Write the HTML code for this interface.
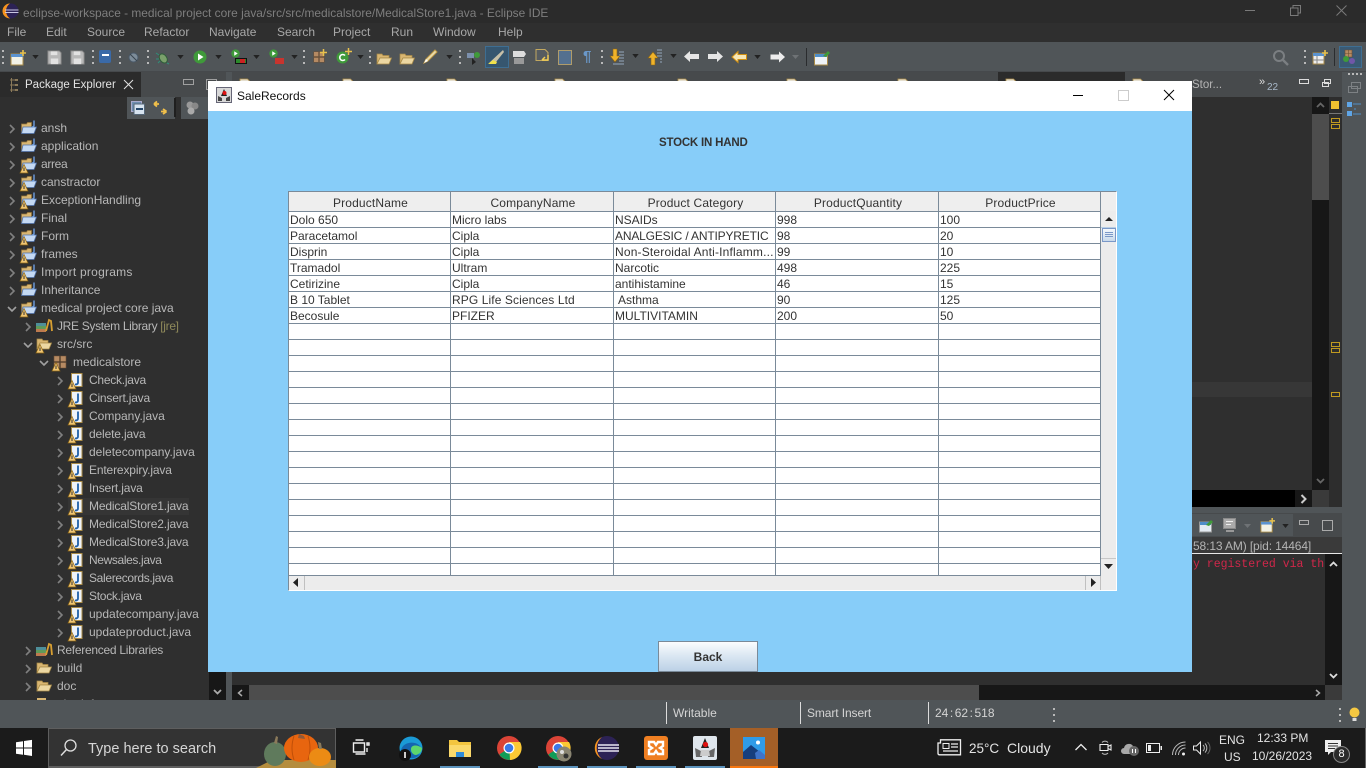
<!DOCTYPE html>
<html><head><meta charset="utf-8"><title>Eclipse</title>
<style>
html,body{margin:0;padding:0;width:1366px;height:768px;overflow:hidden;background:#505558}
body{position:relative;font-family:"Liberation Sans",sans-serif}
.b{position:absolute}
.t{position:absolute;white-space:nowrap;line-height:16px}
.m{color:#a8a8a8;font-size:12px;top:24px}
.tr{color:#b8b8b8;font-size:12px}
svg{position:absolute;overflow:visible}
symbol{overflow:visible}
.h{position:absolute;top:192px;height:19px;background:#eeeeee;text-align:center;font-size:12px;line-height:22px;color:#333;box-sizing:border-box;letter-spacing:.15px;padding-left:2px}
.c{position:absolute;font-size:12px;color:#333;line-height:16px;white-space:nowrap;overflow:hidden}
.hl{position:absolute;left:289px;width:812px;height:1px;background:#7a8a99}
.vl{position:absolute;top:192px;width:1px;height:383px;background:#7a8a99}
.dot{position:absolute;width:2px;height:2px;background:#b9b9b9}
.tb{position:absolute;left:0;bottom:0;height:2px;width:40px;background:#5c93bd}
</style></head><body>
<svg width="0" height="0" style="position:absolute">
<defs>
<symbol id="chev" viewBox="0 0 10 10"><path d="M3 1l4 4-4 4" fill="none" stroke="#808080" stroke-width="1.6"/></symbol>
<symbol id="chevd" viewBox="0 0 10 10"><path d="M1 3l4 4 4-4" fill="none" stroke="#a0a0a0" stroke-width="1.6"/></symbol>
<symbol id="warn" viewBox="0 0 8 8"><path d="M4-1.500L8 7H0z" fill="#f0c674" stroke="#8a6414" stroke-width=".7"/><path d="M4 1.500v3.500" stroke="#333" stroke-width="1"/></symbol>
<symbol id="proj" viewBox="0 0 16 16"><path d="M1 4h5l1-1.500h4V13H1z" fill="#d9b672" stroke="#96753a" stroke-width=".7"/><path d="M2.500 7H16l-2.500 6.500H1z" fill="#c4d9f3" stroke="#4d6fa8" stroke-width=".8"/><path d="M13.500 .5v5q0 1.500-2 1.500" fill="none" stroke="#6f9fe0" stroke-width="1.400"/></symbol>
<symbol id="jf" viewBox="0 0 16 16"><path d="M3.500 1.500h10.500v13H3.500z" fill="#eef3fa" stroke="#a98b47" stroke-width="1"/><path d="M10 3.500v7q0 2-3 2" fill="none" stroke="#1f5fa8" stroke-width="1.800"/></symbol>
<symbol id="lib" viewBox="0 0 16 16"><path d="M0 5h10v3H0z" fill="#4e8f9a"/><path d="M0 8h10v3H0z" fill="#5f9b5a"/><path d="M0 11h10v3H0z" fill="#bd7a4e"/><path d="M10 13l3-11 2 1 1 10" fill="none" stroke="#d9a032" stroke-width="1.800"/></symbol>
<symbol id="folder" viewBox="0 0 16 16"><path d="M1 3h5l1 1.500h5V7H4L1 13z" fill="#d9b672" stroke="#a98b47" stroke-width=".7"/><path d="M4 7h11.500L13 13H1z" fill="#ecd7a2" stroke="#a98b47" stroke-width=".8"/></symbol>
<symbol id="pkg" viewBox="0 0 16 16"><path d="M2 2h5.500v5.500H2zM8.500 2H14v5.500H8.500zM2 8.500h5.500V14H2zM8.500 8.500H14V14H8.500z" fill="#b58a63" stroke="#6e4f33" stroke-width=".6"/></symbol>
<symbol id="dd" viewBox="0 0 8 5"><path d="M0 0h8L4 5z" fill="#222"/></symbol>
<symbol id="newf" viewBox="0 0 16 16"><path d="M1 4h12v11H1z" fill="#f2f2e6" stroke="#a98b47"/><path d="M1 4h12v3H1z" fill="#5c93cf"/><path d="M13 0v6M10 3h6" stroke="#e8c14d" stroke-width="1.600"/></symbol>
<symbol id="run" viewBox="0 0 14 14"><circle cx="7" cy="7" r="6.500" fill="#3f9a3a"/><path d="M5 3.500L10.500 7 5 10.500z" fill="#fff"/></symbol>
<symbol id="save" viewBox="0 0 16 16"><path d="M1 1h12l2 2v12H1z" fill="#b8b8b8" stroke="#8a8a8a"/><path d="M4 1.500h7v4H4zM4 9h8v6H4z" fill="#e2e2e2"/></symbol>
<symbol id="fo" viewBox="0 0 16 16"><path d="M1 4h5l1 1.500h6V8H4l-3 6z" fill="#d9b672" stroke="#a98b47" stroke-width=".7"/><path d="M4 8h11.500L13 14H1z" fill="#ecd7a2" stroke="#a98b47" stroke-width=".8"/></symbol>
<symbol id="ffile" viewBox="0 0 12 14"><path d="M0 14V1h9l3 3v10" fill="#e5dfcf" stroke="#b08f48"/></symbol>
</defs></svg>

<!-- title -->
<div class="b" style="left:0;top:0;width:1366px;height:23px;background:#2b2b2b"></div>
<svg style="left:3px;top:3px" width="16" height="16" viewBox="0 0 16 16"><circle cx="8" cy="8" r="7.500" fill="#2c2255"/><path d="M7 .5A7.500 7.500 0 0 0 7 15.500 9 9 0 0 1 7 .5z" fill="#f7941e"/><path d="M2 7h13.500M2 9.500h13.500" stroke="#c8c6e2" stroke-width="1"/></svg>
<div class="t" style="left:23px;top:5px;font-size:11.900px;color:#7e7e7e">eclipse-workspace - medical project core java/src/src/medicalstore/MedicalStore1.java - Eclipse IDE</div>
<div class="b" style="left:1245px;top:10px;width:10px;height:1px;background:#7a7a7a"></div>
<svg style="left:1290px;top:5px" width="11" height="11"><path d="M.5 3h7.500v7.500H.5zM3 3V.5h7.500V8H8" fill="none" stroke="#7a7a7a"/></svg>
<svg style="left:1336px;top:5px" width="11" height="11"><path d="M.5.500l10 10M10.500.500l-10 10" stroke="#7a7a7a"/></svg>

<!-- menu -->
<div class="b" style="left:0;top:23px;width:1366px;height:19px;background:#2f2f2f"></div>
<span class="t m" style="left:7px">File</span><span class="t m" style="left:46px">Edit</span><span class="t m" style="left:87px">Source</span><span class="t m" style="left:144px">Refactor</span><span class="t m" style="left:209px">Navigate</span><span class="t m" style="left:277px">Search</span><span class="t m" style="left:333px">Project</span><span class="t m" style="left:391px">Run</span><span class="t m" style="left:433px">Window</span><span class="t m" style="left:498px">Help</span>

<!-- toolbar -->
<div class="b" style="left:0;top:42px;width:1366px;height:29px;background:#505558"></div>
<div class="b" style="left:0;top:71px;width:1366px;height:1px;background:#46494c"></div>
<div class="dot" style="left:2px;top:50px"></div><div class="dot" style="left:2px;top:56px"></div><div class="dot" style="left:2px;top:62px"></div>
<svg style="left:10px;top:50px" width="16" height="16"><use href="#newf"/></svg>
<svg style="left:32px;top:55px" width="7" height="4"><use href="#dd"/></svg>
<svg style="left:47px;top:50px" width="15" height="15"><use href="#save"/></svg>
<svg style="left:70px;top:50px" width="15" height="15"><use href="#save"/></svg>
<div class="dot" style="left:92px;top:50px"></div><div class="dot" style="left:92px;top:56px"></div><div class="dot" style="left:92px;top:62px"></div>
<div class="b" style="left:99px;top:50px;width:12px;height:13px;background:#3a6aa8;border-radius:2px"></div><div class="b" style="left:102px;top:54px;width:7px;height:2px;background:#fff"></div>
<div class="dot" style="left:119px;top:50px"></div><div class="dot" style="left:119px;top:56px"></div><div class="dot" style="left:119px;top:62px"></div>
<svg style="left:128px;top:52px" width="11" height="11"><circle cx="5.500" cy="5.500" r="4.500" fill="#7d8c99" stroke="#4a5a6a"/><path d="M2 2l7 7" stroke="#39454f"/></svg>
<div class="dot" style="left:147px;top:50px"></div><div class="dot" style="left:147px;top:56px"></div><div class="dot" style="left:147px;top:62px"></div>
<svg style="left:155px;top:50px" width="16" height="15"><ellipse cx="8" cy="8.500" rx="3.500" ry="5" fill="#7aa06b" stroke="#2f5d3a" transform="rotate(-35 8 8)"/><path d="M1 3l3 2M1 9h3M12 13l2 1M3 13l2-2" stroke="#2f8f7a"/></svg>
<svg style="left:177px;top:55px" width="7" height="4"><use href="#dd"/></svg>
<svg style="left:193px;top:50px" width="14" height="14"><use href="#run"/></svg>
<svg style="left:215px;top:55px" width="7" height="4"><use href="#dd"/></svg>
<svg style="left:231px;top:49px" width="9" height="9"><use href="#run"/></svg>
<div class="b" style="left:235px;top:58px;width:10px;height:4px;background:#2b8a2b;border:1px solid #111"></div><div class="b" style="left:240px;top:59px;width:5px;height:4px;background:#c22"></div>
<svg style="left:253px;top:55px" width="7" height="4"><use href="#dd"/></svg>
<svg style="left:269px;top:49px" width="9" height="9"><use href="#run"/></svg>
<div class="b" style="left:275px;top:58px;width:9px;height:6px;background:#c8342e"></div>
<svg style="left:291px;top:55px" width="7" height="4"><use href="#dd"/></svg>
<div class="dot" style="left:303px;top:50px"></div><div class="dot" style="left:303px;top:56px"></div><div class="dot" style="left:303px;top:62px"></div>
<svg style="left:312px;top:50px" width="14" height="14"><use href="#pkg"/></svg><svg style="left:320px;top:49px" width="7" height="7"><path d="M3.500 0v7M0 3.500h7" stroke="#e8c14d" stroke-width="1.500"/></svg>
<svg style="left:336px;top:51px" width="13" height="13"><circle cx="6.500" cy="6.500" r="6" fill="#3f9a3a"/><path d="M9 4.500a3 3 0 1 0 0 4" fill="none" stroke="#fff" stroke-width="1.600"/></svg><svg style="left:345px;top:48px" width="7" height="7"><path d="M3.500 0v7M0 3.500h7" stroke="#e8c14d" stroke-width="1.500"/></svg>
<svg style="left:357px;top:55px" width="7" height="4"><use href="#dd"/></svg>
<div class="dot" style="left:369px;top:50px"></div><div class="dot" style="left:369px;top:56px"></div><div class="dot" style="left:369px;top:62px"></div>
<svg style="left:376px;top:50px" width="16" height="16"><use href="#fo"/></svg>
<svg style="left:399px;top:50px" width="16" height="16"><use href="#fo"/></svg>
<svg style="left:423px;top:49px" width="16" height="16"><path d="M1 14l4-2 9-9-2-2-9 9z" fill="#eadcae" stroke="#bf9a45"/><path d="M1 14l2-4 2 2z" fill="#fff"/></svg>
<svg style="left:446px;top:55px" width="7" height="4"><use href="#dd"/></svg>
<div class="dot" style="left:459px;top:50px"></div><div class="dot" style="left:459px;top:56px"></div><div class="dot" style="left:459px;top:62px"></div>
<svg style="left:466px;top:50px" width="15" height="15"><path d="M1 3h7v5H1z" fill="#7c90ad"/><circle cx="11" cy="5" r="3" fill="#3f9a3a"/><path d="M6 8v7l4-3z" fill="#222"/></svg>
<div class="b" style="left:485px;top:46px;width:22px;height:20px;background:#36566f;border:1px solid #3e6e92"></div>
<svg style="left:488px;top:49px" width="17" height="16"><path d="M1 14L15 1l1 2-8 10z" fill="#c7c0a8"/><path d="M0 15l5-4 4 2-1 2z" fill="#efe14b"/></svg>
<svg style="left:512px;top:50px" width="15" height="15"><path d="M1 1h11l2 3-2 3H1z" fill="#ddd"/><path d="M2 8h10v6H2z" fill="#999"/></svg>
<svg style="left:535px;top:49px" width="15" height="15"><path d="M1 .5h9l3 3v8H1z" fill="#555b60" stroke="#c2a860"/><path d="M7 11h6V6M7 11l3-3" fill="none" stroke="#f0cc55" stroke-width="1.500"/></svg>
<div class="b" style="left:558px;top:50px;width:12px;height:13px;background:#54708f;border:1px solid #b09c6a"></div>
<span class="t" style="left:583px;top:49px;font-size:15px;font-weight:bold;color:#6a98c9">¶</span>
<div class="dot" style="left:601px;top:50px"></div><div class="dot" style="left:601px;top:56px"></div><div class="dot" style="left:601px;top:62px"></div>
<svg style="left:610px;top:48px" width="15" height="18"><path d="M3 1h4v7h3l-5 6-5-6h3z" fill="#f0b32a" stroke="#8a6414" stroke-width=".6"/><path d="M9 4h5M9 7h5M9 10h5M9 13h5M3 16h11" stroke="#94a7bd"/></svg>
<svg style="left:632px;top:54px" width="7" height="4"><use href="#dd"/></svg>
<svg style="left:648px;top:48px" width="15" height="18"><path d="M5 4l5 6H7v7H3v-7H0z" fill="#f0b32a" stroke="#8a6414" stroke-width=".6"/><path d="M9 2h5M9 5h5M9 8h5M12 11h2M12 14h2" stroke="#94a7bd"/></svg>
<svg style="left:670px;top:54px" width="7" height="4"><use href="#dd"/></svg>
<svg style="left:684px;top:50px" width="16" height="13"><path d="M0 6.500L6 1v3h9v5H6v3z" fill="#e6e6e6"/></svg>
<svg style="left:707px;top:50px" width="16" height="13"><path d="M16 6.500L10 1v3H1v5h9v3z" fill="#e6e6e6"/></svg>
<svg style="left:732px;top:51px" width="15" height="12"><path d="M0 6L6 .5v3h8.500v5H6v3z" fill="#f7e7b6" stroke="#d18f10"/></svg>
<svg style="left:754px;top:55px" width="7" height="4"><use href="#dd"/></svg>
<svg style="left:770px;top:51px" width="15" height="12"><path d="M15 6L9 .5v3H.5v5H9v3z" fill="#ededed"/></svg>
<svg style="left:792px;top:55px" width="7" height="4"><path d="M0 0h7L3.500 4z" fill="#6e7275"/></svg>
<div class="b" style="left:806px;top:48px;width:1px;height:18px;background:#2a2c2e"></div>
<svg style="left:814px;top:50px" width="16" height="16"><path d="M.5 4h13v11H.5z" fill="#eef3f8" stroke="#a98b47"/><path d="M1 4h12v3H1z" fill="#4f8ec9"/><path d="M9 6l5-5 2 2-4 4z" fill="#3f9a3a"/></svg>
<svg style="left:1273px;top:50px" width="16" height="16"><circle cx="6" cy="6" r="5" fill="none" stroke="#7b7f82" stroke-width="2"/><path d="M10 10l5 5" stroke="#7b7f82" stroke-width="2.400"/></svg>
<div class="dot" style="left:1304px;top:50px"></div><div class="dot" style="left:1304px;top:56px"></div><div class="dot" style="left:1304px;top:62px"></div>
<svg style="left:1312px;top:50px" width="16" height="15"><path d="M1 3h11v11H1z" fill="#eee" stroke="#a98b47"/><path d="M1 3h11v3H1z" fill="#5c93cf"/><path d="M5 6v8M1 10h11" stroke="#888"/><path d="M13 0v6M10 3h6" stroke="#e8c14d" stroke-width="1.600"/></svg>
<div class="b" style="left:1334px;top:48px;width:1px;height:18px;background:#2a2c2e"></div>
<div class="b" style="left:1339px;top:46px;width:21px;height:20px;background:#3a5a74;border:1px solid #3e6e92"></div>
<svg style="left:1342px;top:49px" width="16" height="16"><path d="M3 1h7v7H3z" fill="#b58a63" stroke="#6e4f33" stroke-width=".6"/><path d="M3 4.500h7M6.500 1v7" stroke="#6e4f33" stroke-width=".6"/><circle cx="4" cy="10" r="3" fill="#3f9a3a"/><circle cx="10" cy="12" r="3" fill="#7057a8"/></svg>

<!-- tab strip + panels -->
<div class="b" style="left:0;top:72px;width:1342px;height:25px;background:#474a4c"></div>
<div class="b" style="left:226px;top:72px;width:6px;height:628px;background:#505558"></div>
<div class="b" style="left:232px;top:97px;width:1093px;height:588px;background:#2f2f2f"></div>
<div class="b" style="left:0;top:72px;width:141px;height:25px;background:#2b2b2b"></div>
<div class="b" style="left:998px;top:72px;width:127px;height:25px;background:#2b2b2b"></div>
<svg style="left:9px;top:78px" width="10" height="14"><path d="M2.500 0v14M1 2h8M1 7h8M1 12h8" stroke="#8b7a5a"/><path d="M6 1h3v2H6zM6 6h3v2H6zM6 11h3v2H6z" fill="#8b7a5a"/></svg>
<span class="t" style="left:25px;top:77px;font-size:11.500px;color:#e3e3e3">Package Explorer</span>
<svg style="left:124px;top:80px" width="9" height="9"><path d="M0 0l9 9M9 0L0 9" stroke="#e0e0e0"/></svg>
<div class="b" style="left:183px;top:79px;width:9px;height:4px;border:1px solid #a0a0a0"></div>
<div class="b" style="left:206px;top:79px;width:9px;height:9px;border:1px solid #a0a0a0"></div>
<div class="b" style="left:0;top:97px;width:226px;height:603px;background:#2f2f2f"></div>
<div class="b" style="left:127px;top:97px;width:48px;height:22px;background:#505558"></div>
<div class="b" style="left:181px;top:97px;width:27px;height:22px;background:#505558"></div>
<div class="b" style="left:174px;top:98px;width:2px;height:19px;background:#1f1f1f"></div>
<svg style="left:131px;top:101px" width="14" height="14"><path d="M.5.500h10v10H.5z" fill="#6f8fb0" stroke="#aac"/><path d="M3 3h10.500v10.500H3z" fill="#d7e3ef" stroke="#567"/><path d="M5 8h7" stroke="#27486b" stroke-width="2"/></svg>
<svg style="left:153px;top:101px" width="14" height="14"><path d="M6 3H1m0 0l3-2.500M1 3l3 2.500M8 10.500h5.500m0 0L10 8m3.500 2.500L10 13" fill="none" stroke="#f0bf4a" stroke-width="1.800"/></svg>
<svg style="left:185px;top:101px" width="14" height="14"><circle cx="5" cy="4" r="3.500" fill="#999"/><circle cx="10" cy="5" r="3.500" fill="#888"/><circle cx="6" cy="10" r="3.500" fill="#aaa"/></svg>

<!-- editor right -->
<div class="b" style="left:1192px;top:382px;width:120px;height:15px;background:#373737"></div>
<div class="b" style="left:1312px;top:97px;width:17px;height:393px;background:#171717"></div>
<div class="b" style="left:1312px;top:114px;width:17px;height:86px;background:#4d4d4d"></div>
<svg style="left:1316px;top:102px" width="9" height="6"><path d="M1 5l3.500-3.500L8 5" fill="none" stroke="#666" stroke-width="1.800"/></svg>
<svg style="left:1316px;top:478px" width="9" height="6"><path d="M1 1l3.500 3.500L8 1" fill="none" stroke="#666" stroke-width="1.800"/></svg>
<div class="b" style="left:1329px;top:97px;width:13px;height:410px;background:#2d2d2d"></div>
<div class="b" style="left:1331px;top:101px;width:8px;height:8px;background:#f0c030"></div>
<div class="b" style="left:1329px;top:113px;width:13px;height:1px;background:#777"></div>
<div class="b" style="left:1331px;top:118px;width:7px;height:3px;border:1px solid #c09a20"></div>
<div class="b" style="left:1331px;top:124px;width:7px;height:3px;border:1px solid #c09a20"></div>
<div class="b" style="left:1331px;top:342px;width:7px;height:3px;border:1px solid #c09a20"></div>
<div class="b" style="left:1331px;top:348px;width:7px;height:3px;border:1px solid #c09a20"></div>
<div class="b" style="left:1331px;top:392px;width:7px;height:3px;border:1px solid #c09a20"></div>
<div class="b" style="left:1192px;top:490px;width:103px;height:17px;background:#000"></div>
<div class="b" style="left:1295px;top:490px;width:17px;height:17px;background:#171717"></div>
<svg style="left:1300px;top:494px" width="8" height="10"><path d="M1.500 1l4 4-4 4" fill="none" stroke="#ccc" stroke-width="2"/></svg>
<div class="b" style="left:1312px;top:490px;width:17px;height:17px;background:#3a3a3a"></div>
<div class="b" style="left:1192px;top:507px;width:150px;height:6px;background:#505558"></div>

<!-- console -->
<div class="b" style="left:1192px;top:513px;width:150px;height:24px;background:#474a4c"></div>
<div class="b" style="left:1192px;top:514px;width:101px;height:22px;background:#505558"></div>
<svg style="left:1199px;top:519px" width="14" height="14"><path d="M.5 3h12v10H.5z" fill="#e4ebf2" stroke="#999"/><path d="M1 3h11v3H1z" fill="#4f8ec9"/><path d="M7 6l5-5 2 2-4 4z" fill="#3f9a3a"/></svg>
<svg style="left:1223px;top:518px" width="14" height="15"><path d="M.5.500h12v10H.5z" fill="#aaa" stroke="#8a8a8a"/><path d="M3 3.500h7M3 6.500h5" stroke="#eee"/><path d="M3 13h8" stroke="#999" stroke-width="2"/></svg>
<svg style="left:1244px;top:524px" width="7" height="4"><path d="M0 0h7L3.500 4z" fill="#6e7275"/></svg>
<svg style="left:1260px;top:518px" width="15" height="15"><use href="#newf"/></svg>
<svg style="left:1282px;top:524px" width="7" height="4"><use href="#dd"/></svg>
<div class="b" style="left:1299px;top:520px;width:8px;height:3px;border:1px solid #aaa"></div>
<div class="b" style="left:1322px;top:520px;width:9px;height:9px;border:1px solid #aaa"></div>
<div class="b" style="left:1192px;top:537px;width:150px;height:16px;background:#3a3a3a"></div>
<span class="t" style="left:1193px;top:538px;font-size:12px;letter-spacing:-.12px;color:#b4b4b4">58:13 AM) [pid: 14464]</span>
<div class="b" style="left:1192px;top:553px;width:150px;height:1px;background:#e8e8e8"></div>
<div class="b" style="left:1192px;top:554px;width:133px;height:131px;background:#2f2f2f"></div>
<span class="t" style="left:1193px;top:557px;width:132px;overflow:hidden;font-family:'Liberation Mono',monospace;font-size:11.500px;line-height:16px;height:16px;color:#d0274a">y registered via th</span>
<div class="b" style="left:1325px;top:554px;width:17px;height:131px;background:#171717"></div>
<svg style="left:1329px;top:561px" width="9" height="6"><path d="M1 5l3.500-3.500L8 5" fill="none" stroke="#ddd" stroke-width="1.800"/></svg>
<svg style="left:1329px;top:673px" width="9" height="6"><path d="M1 1l3.500 3.500L8 1" fill="none" stroke="#ddd" stroke-width="1.800"/></svg>
<div class="b" style="left:232px;top:685px;width:1110px;height:15px;background:#171717"></div>
<div class="b" style="left:249px;top:685px;width:730px;height:15px;background:#4d4d4d"></div>
<svg style="left:237px;top:689px" width="6" height="8"><path d="M5 1L1.500 4 5 7" fill="none" stroke="#aaa" stroke-width="1.500"/></svg>
<svg style="left:1315px;top:689px" width="6" height="8"><path d="M1 1l3.500 3L1 7" fill="none" stroke="#aaa" stroke-width="1.500"/></svg>
<div class="b" style="left:1325px;top:685px;width:17px;height:15px;background:#3a3a3a"></div>
<div class="b" style="left:209px;top:97px;width:17px;height:603px;background:#171717"></div>
<svg style="left:213px;top:689px" width="9" height="6"><path d="M1 1l3.500 3.500L8 1" fill="none" stroke="#aaa" stroke-width="1.800"/></svg>

<!-- right trim -->
<div class="dot" style="left:1348px;top:73px"></div><div class="dot" style="left:1352px;top:73px"></div><div class="dot" style="left:1356px;top:73px"></div><div class="dot" style="left:1360px;top:73px"></div>
<svg style="left:1348px;top:82px" width="13" height="12"><path d="M3.500.5h9v6h-9zM.5 4.500h9v6h-9z" fill="none" stroke="#7d8184"/></svg>
<svg style="left:1347px;top:102px" width="15" height="16"><path d="M0 0h5v5H0zM0 9h5v5H0z" fill="#5fa5e6"/><path d="M6 2h8M7 7h2M6 12h8" stroke="#4f8ec9"/></svg>
<span class="t" style="left:1192px;top:77px;font-size:11.500px;color:#b4b4b4">Stor...</span>
<span class="t" style="left:1259px;top:74px;font-size:11px;color:#ddd">»</span>
<span class="t" style="left:1267px;top:80px;font-size:10px;color:#a8b8c8">22</span>
<div class="b" style="left:1299px;top:79px;width:8px;height:3px;border:1px solid #ddd"></div>
<svg style="left:1322px;top:79px" width="9" height="8"><path d="M2.500.5h6v4h-6zM.5 3.500h6v4h-6z" fill="none" stroke="#ddd"/></svg>
<svg style="left:240px;top:78px" width="10" height="12"><use href="#ffile"/></svg><svg style="left:343px;top:78px" width="10" height="12"><use href="#ffile"/></svg><svg style="left:447px;top:78px" width="10" height="12"><use href="#ffile"/></svg><svg style="left:555px;top:78px" width="10" height="12"><use href="#ffile"/></svg><svg style="left:678px;top:78px" width="10" height="12"><use href="#ffile"/></svg><svg style="left:787px;top:78px" width="10" height="12"><use href="#ffile"/></svg><svg style="left:898px;top:78px" width="10" height="12"><use href="#ffile"/></svg><svg style="left:1006px;top:78px" width="10" height="12"><use href="#ffile"/></svg><svg style="left:1133px;top:78px" width="10" height="12"><use href="#ffile"/></svg>

<!-- tree -->
<span class="t tr" style="left:41px;top:120px">ansh</span>
<span class="t tr" style="left:41px;top:138px">application</span>
<span class="t tr" style="left:41px;top:156px;letter-spacing:-.35px">arrea</span>
<span class="t tr" style="left:41px;top:174px">canstractor</span>
<span class="t tr" style="left:41px;top:192px">ExceptionHandling</span>
<span class="t tr" style="left:41px;top:210px">Final</span>
<span class="t tr" style="left:41px;top:228px">Form</span>
<span class="t tr" style="left:41px;top:246px">frames</span>
<span class="t tr" style="left:41px;top:264px;letter-spacing:.24px">Import programs</span>
<span class="t tr" style="left:41px;top:282px">Inheritance</span>
<span class="t tr" style="left:41px;top:300px">medical project core java</span>
<span class="t tr" style="left:57px;top:318px;letter-spacing:-.32px">JRE System Library <span style="color:#8f8a5a">[jre]</span></span>
<span class="t tr" style="left:57px;top:336px">src/src</span>
<span class="t tr" style="left:73px;top:354px">medicalstore</span>
<span class="t tr" style="left:89px;top:372px;letter-spacing:-.25px">Check.java</span>
<span class="t tr" style="left:89px;top:390px;letter-spacing:-.2px">Cinsert.java</span>
<span class="t tr" style="left:89px;top:408px">Company.java</span>
<span class="t tr" style="left:89px;top:426px;letter-spacing:-.15px">delete.java</span>
<span class="t tr" style="left:89px;top:444px">deletecompany.java</span>
<span class="t tr" style="left:89px;top:462px;letter-spacing:-.15px">Enterexpiry.java</span>
<span class="t tr" style="left:89px;top:480px;letter-spacing:-.15px">Insert.java</span>
<div class="b" style="left:68px;top:498px;width:121px;height:17px;background:#353535"></div>
<span class="t tr" style="left:89px;top:498px;letter-spacing:-.15px">MedicalStore1.java</span>
<span class="t tr" style="left:89px;top:516px;letter-spacing:-.15px">MedicalStore2.java</span>
<span class="t tr" style="left:89px;top:534px;letter-spacing:-.15px">MedicalStore3.java</span>
<span class="t tr" style="left:89px;top:552px;letter-spacing:-.37px">Newsales.java</span>
<span class="t tr" style="left:89px;top:570px;letter-spacing:-.33px">Salerecords.java</span>
<span class="t tr" style="left:89px;top:588px;letter-spacing:-.27px">Stock.java</span>
<span class="t tr" style="left:89px;top:606px">updatecompany.java</span>
<span class="t tr" style="left:89px;top:624px">updateproduct.java</span>
<span class="t tr" style="left:57px;top:642px;letter-spacing:-.27px">Referenced Libraries</span>
<span class="t tr" style="left:57px;top:660px">build</span>
<span class="t tr" style="left:57px;top:678px">doc</span>

<svg style="left:7px;top:124px" width="10" height="10"><use href="#chev"/></svg><svg style="left:20px;top:120px" width="17" height="16"><use href="#proj"/></svg>
<svg style="left:7px;top:142px" width="10" height="10"><use href="#chev"/></svg><svg style="left:20px;top:138px" width="17" height="16"><use href="#proj"/></svg>
<svg style="left:7px;top:160px" width="10" height="10"><use href="#chev"/></svg><svg style="left:20px;top:156px" width="17" height="16"><use href="#proj"/></svg><svg style="left:20px;top:166px" width="8" height="8"><use href="#warn"/></svg>
<svg style="left:7px;top:178px" width="10" height="10"><use href="#chev"/></svg><svg style="left:20px;top:174px" width="17" height="16"><use href="#proj"/></svg><svg style="left:20px;top:184px" width="8" height="8"><use href="#warn"/></svg>
<svg style="left:7px;top:196px" width="10" height="10"><use href="#chev"/></svg><svg style="left:20px;top:192px" width="17" height="16"><use href="#proj"/></svg><svg style="left:20px;top:202px" width="8" height="8"><use href="#warn"/></svg>
<svg style="left:7px;top:214px" width="10" height="10"><use href="#chev"/></svg><svg style="left:20px;top:210px" width="17" height="16"><use href="#proj"/></svg>
<svg style="left:7px;top:232px" width="10" height="10"><use href="#chev"/></svg><svg style="left:20px;top:228px" width="17" height="16"><use href="#proj"/></svg><svg style="left:20px;top:238px" width="8" height="8"><use href="#warn"/></svg>
<svg style="left:7px;top:250px" width="10" height="10"><use href="#chev"/></svg><svg style="left:20px;top:246px" width="17" height="16"><use href="#proj"/></svg><svg style="left:20px;top:256px" width="8" height="8"><use href="#warn"/></svg>
<svg style="left:7px;top:268px" width="10" height="10"><use href="#chev"/></svg><svg style="left:20px;top:264px" width="17" height="16"><use href="#proj"/></svg><svg style="left:20px;top:274px" width="8" height="8"><use href="#warn"/></svg>
<svg style="left:7px;top:286px" width="10" height="10"><use href="#chev"/></svg><svg style="left:20px;top:282px" width="17" height="16"><use href="#proj"/></svg>
<svg style="left:7px;top:304px" width="10" height="10"><use href="#chevd"/></svg><svg style="left:20px;top:300px" width="17" height="16"><use href="#proj"/></svg><svg style="left:20px;top:310px" width="8" height="8"><use href="#warn"/></svg>
<svg style="left:23px;top:322px" width="10" height="10"><use href="#chev"/></svg><svg style="left:36px;top:318px" width="16" height="16"><use href="#lib"/></svg>
<svg style="left:23px;top:340px" width="10" height="10"><use href="#chevd"/></svg><svg style="left:36px;top:336px" width="16" height="16"><use href="#folder"/></svg><svg style="left:36px;top:346px" width="8" height="8"><use href="#warn"/></svg>
<svg style="left:39px;top:358px" width="10" height="10"><use href="#chevd"/></svg><svg style="left:52px;top:354px" width="16" height="16"><use href="#pkg"/></svg><svg style="left:52px;top:364px" width="8" height="8"><use href="#warn"/></svg>
<svg style="left:55px;top:376px" width="10" height="10"><use href="#chev"/></svg><svg style="left:68px;top:372px" width="16" height="16"><use href="#jf"/></svg><svg style="left:68px;top:382px" width="8" height="8"><use href="#warn"/></svg>
<svg style="left:55px;top:394px" width="10" height="10"><use href="#chev"/></svg><svg style="left:68px;top:390px" width="16" height="16"><use href="#jf"/></svg><svg style="left:68px;top:400px" width="8" height="8"><use href="#warn"/></svg>
<svg style="left:55px;top:412px" width="10" height="10"><use href="#chev"/></svg><svg style="left:68px;top:408px" width="16" height="16"><use href="#jf"/></svg><svg style="left:68px;top:418px" width="8" height="8"><use href="#warn"/></svg>
<svg style="left:55px;top:430px" width="10" height="10"><use href="#chev"/></svg><svg style="left:68px;top:426px" width="16" height="16"><use href="#jf"/></svg><svg style="left:68px;top:436px" width="8" height="8"><use href="#warn"/></svg>
<svg style="left:55px;top:448px" width="10" height="10"><use href="#chev"/></svg><svg style="left:68px;top:444px" width="16" height="16"><use href="#jf"/></svg><svg style="left:68px;top:454px" width="8" height="8"><use href="#warn"/></svg>
<svg style="left:55px;top:466px" width="10" height="10"><use href="#chev"/></svg><svg style="left:68px;top:462px" width="16" height="16"><use href="#jf"/></svg><svg style="left:68px;top:472px" width="8" height="8"><use href="#warn"/></svg>
<svg style="left:55px;top:484px" width="10" height="10"><use href="#chev"/></svg><svg style="left:68px;top:480px" width="16" height="16"><use href="#jf"/></svg><svg style="left:68px;top:490px" width="8" height="8"><use href="#warn"/></svg>
<svg style="left:55px;top:502px" width="10" height="10"><use href="#chev"/></svg><svg style="left:68px;top:498px" width="16" height="16"><use href="#jf"/></svg><svg style="left:68px;top:508px" width="8" height="8"><use href="#warn"/></svg>
<svg style="left:55px;top:520px" width="10" height="10"><use href="#chev"/></svg><svg style="left:68px;top:516px" width="16" height="16"><use href="#jf"/></svg><svg style="left:68px;top:526px" width="8" height="8"><use href="#warn"/></svg>
<svg style="left:55px;top:538px" width="10" height="10"><use href="#chev"/></svg><svg style="left:68px;top:534px" width="16" height="16"><use href="#jf"/></svg><svg style="left:68px;top:544px" width="8" height="8"><use href="#warn"/></svg>
<svg style="left:55px;top:556px" width="10" height="10"><use href="#chev"/></svg><svg style="left:68px;top:552px" width="16" height="16"><use href="#jf"/></svg><svg style="left:68px;top:562px" width="8" height="8"><use href="#warn"/></svg>
<svg style="left:55px;top:574px" width="10" height="10"><use href="#chev"/></svg><svg style="left:68px;top:570px" width="16" height="16"><use href="#jf"/></svg><svg style="left:68px;top:580px" width="8" height="8"><use href="#warn"/></svg>
<svg style="left:55px;top:592px" width="10" height="10"><use href="#chev"/></svg><svg style="left:68px;top:588px" width="16" height="16"><use href="#jf"/></svg><svg style="left:68px;top:598px" width="8" height="8"><use href="#warn"/></svg>
<svg style="left:55px;top:610px" width="10" height="10"><use href="#chev"/></svg><svg style="left:68px;top:606px" width="16" height="16"><use href="#jf"/></svg><svg style="left:68px;top:616px" width="8" height="8"><use href="#warn"/></svg>
<svg style="left:55px;top:628px" width="10" height="10"><use href="#chev"/></svg><svg style="left:68px;top:624px" width="16" height="16"><use href="#jf"/></svg><svg style="left:68px;top:634px" width="8" height="8"><use href="#warn"/></svg>
<svg style="left:23px;top:646px" width="10" height="10"><use href="#chev"/></svg><svg style="left:36px;top:642px" width="16" height="16"><use href="#lib"/></svg>
<svg style="left:23px;top:664px" width="10" height="10"><use href="#chev"/></svg><svg style="left:36px;top:660px" width="16" height="16"><use href="#folder"/></svg>
<svg style="left:23px;top:682px" width="10" height="10"><use href="#chev"/></svg><svg style="left:36px;top:678px" width="16" height="16"><use href="#folder"/></svg>
<div class="b" style="left:37px;top:698px;width:9px;height:2px;background:#d9b672"></div>
<span class="t tr" style="left:57px;top:696px;height:4px;overflow:hidden">ebe-inf</span>

<!-- status -->
<div class="b" style="left:0;top:700px;width:1366px;height:28px;background:#505558"></div>
<div class="b" style="left:666px;top:702px;width:1px;height:22px;background:#dcdcdc"></div>
<div class="b" style="left:800px;top:702px;width:1px;height:22px;background:#dcdcdc"></div>
<div class="b" style="left:928px;top:702px;width:1px;height:22px;background:#dcdcdc"></div>
<span class="t" style="left:673px;top:705px;font-size:12px;color:#d4d4d4">Writable</span>
<span class="t" style="left:807px;top:705px;font-size:12px;letter-spacing:-.1px;color:#d4d4d4">Smart Insert</span>
<span class="t" style="left:935px;top:705px;font-size:12px;word-spacing:-1.800px;color:#d4d4d4">24 : 62 : 518</span>
<div class="dot" style="left:1053px;top:708px"></div><div class="dot" style="left:1053px;top:714px"></div><div class="dot" style="left:1053px;top:720px"></div>
<div class="dot" style="left:1339px;top:708px"></div><div class="dot" style="left:1339px;top:714px"></div><div class="dot" style="left:1339px;top:720px"></div>
<svg style="left:1349px;top:707px" width="11" height="16"><circle cx="5.500" cy="5.500" r="5" fill="#f5c842"/><path d="M3.500 11h4v3h-4z" fill="#ddd"/></svg>

<!-- dialog -->
<div class="b" style="left:208px;top:81px;width:984px;height:591px;background:#87cdf9"></div>
<div class="b" style="left:208px;top:81px;width:984px;height:30px;background:#fff"></div>
<svg style="left:216px;top:87px" width="16" height="16"><path d="M0 0h16v16H0z" fill="#d8d8d8"/><path d="M.5.500h15v15H.5z" fill="none" stroke="#667"/><path d="M8 2l3 7H5z" fill="#222"/><circle cx="8.500" cy="6" r="2" fill="#d11"/><path d="M2 9l4 2v3H2zM14 9l-4 2v3h4z" fill="#444"/></svg>
<span class="t" style="left:237px;top:88px;font-size:12px;color:#111">SaleRecords</span>
<div class="b" style="left:1073px;top:95px;width:10px;height:1px;background:#000"></div>
<div class="b" style="left:1118px;top:90px;width:9px;height:9px;border:1px solid #ccc"></div>
<svg style="left:1164px;top:90px" width="10" height="10"><path d="M0 0l10 10M10 0L0 10" stroke="#000"/></svg>
<span class="t" style="left:659px;top:135px;font-size:11.500px;letter-spacing:-.2px;font-weight:bold;color:#333">STOCK IN HAND</span>

<!-- table -->
<div class="b" style="left:288px;top:191px;width:829px;height:400px;background:#ececec;box-sizing:border-box;border:1px solid #fff;border-top-color:#7a8a99;border-left-color:#7a8a99"></div>
<div class="b" style="left:289px;top:192px;width:812px;height:383px;background:#fff"></div>
<div class="h" style="left:289px;width:161px">ProductName</div>
<div class="h" style="left:451px;width:162px">CompanyName</div>
<div class="h" style="left:614px;width:161px">Product Category</div>
<div class="h" style="left:776px;width:162px">ProductQuantity</div>
<div class="h" style="left:939px;width:161px">ProductPrice</div>
<div class="b" style="left:1101px;top:192px;width:15px;height:19px;background:#eee"></div>
<div class="hl" style="top:211px"></div><div class="hl" style="top:227px"></div><div class="hl" style="top:243px"></div><div class="hl" style="top:259px"></div><div class="hl" style="top:275px"></div><div class="hl" style="top:291px"></div><div class="hl" style="top:307px"></div><div class="hl" style="top:323px"></div><div class="hl" style="top:339px"></div><div class="hl" style="top:355px"></div><div class="hl" style="top:371px"></div><div class="hl" style="top:387px"></div><div class="hl" style="top:403px"></div><div class="hl" style="top:419px"></div><div class="hl" style="top:435px"></div><div class="hl" style="top:451px"></div><div class="hl" style="top:467px"></div><div class="hl" style="top:483px"></div><div class="hl" style="top:499px"></div><div class="hl" style="top:515px"></div><div class="hl" style="top:531px"></div><div class="hl" style="top:547px"></div><div class="hl" style="top:563px"></div>
<div class="vl" style="left:450px"></div><div class="vl" style="left:613px"></div><div class="vl" style="left:775px"></div><div class="vl" style="left:938px"></div><div class="vl" style="left:1100px"></div>

<span class="c" style="left:290px;top:212px;width:160px">Dolo 650</span><span class="c" style="left:452px;top:212px;width:160px">Micro labs</span><span class="c" style="left:615px;top:212px;width:160px">NSAIDs</span><span class="c" style="left:777px;top:212px;width:160px">998</span><span class="c" style="left:940px;top:212px;width:160px">100</span>
<span class="c" style="left:290px;top:228px;width:160px">Paracetamol</span><span class="c" style="left:452px;top:228px;width:160px">Cipla</span><span class="c" style="left:615px;top:228px;width:160px;letter-spacing:-.17px">ANALGESIC / ANTIPYRETIC</span><span class="c" style="left:777px;top:228px;width:160px">98</span><span class="c" style="left:940px;top:228px;width:160px">20</span>
<span class="c" style="left:290px;top:244px;width:160px">Disprin</span><span class="c" style="left:452px;top:244px;width:160px">Cipla</span><span class="c" style="left:615px;top:244px;width:160px;letter-spacing:.18px">Non-Steroidal Anti-Inflamm...</span><span class="c" style="left:777px;top:244px;width:160px">99</span><span class="c" style="left:940px;top:244px;width:160px">10</span>
<span class="c" style="left:290px;top:260px;width:160px">Tramadol</span><span class="c" style="left:452px;top:260px;width:160px">Ultram</span><span class="c" style="left:615px;top:260px;width:160px">Narcotic</span><span class="c" style="left:777px;top:260px;width:160px">498</span><span class="c" style="left:940px;top:260px;width:160px">225</span>
<span class="c" style="left:290px;top:276px;width:160px">Cetirizine</span><span class="c" style="left:452px;top:276px;width:160px">Cipla</span><span class="c" style="left:615px;top:276px;width:160px">antihistamine</span><span class="c" style="left:777px;top:276px;width:160px">46</span><span class="c" style="left:940px;top:276px;width:160px">15</span>
<span class="c" style="left:290px;top:292px;width:160px">B 10 Tablet</span><span class="c" style="left:452px;top:292px;width:160px;letter-spacing:.1px">RPG Life Sciences Ltd</span><span class="c" style="left:618px;top:292px;width:150px">Asthma</span><span class="c" style="left:777px;top:292px;width:160px">90</span><span class="c" style="left:940px;top:292px;width:160px">125</span>
<span class="c" style="left:290px;top:308px;width:160px">Becosule</span><span class="c" style="left:452px;top:308px;width:160px">PFIZER</span><span class="c" style="left:615px;top:308px;width:160px">MULTIVITAMIN</span><span class="c" style="left:777px;top:308px;width:160px">200</span><span class="c" style="left:940px;top:308px;width:160px">50</span>

<!-- vscroll -->
<div class="b" style="left:1101px;top:211px;width:15px;height:364px;background:#ececec"></div>
<div class="b" style="left:1101px;top:227px;width:15px;height:1px;background:#b8cfe5"></div>
<svg style="left:1105px;top:217px" width="8" height="4"><path d="M0 4h8L4 0z" fill="#222"/></svg>
<div class="b" style="left:1102px;top:228px;width:14px;height:14px;box-sizing:border-box;background:linear-gradient(#f4f8fc,#c8d9ea);border:1px solid #7a98c8"></div>
<div class="b" style="left:1105px;top:232px;width:8px;height:1px;background:#7a98c8"></div><div class="b" style="left:1105px;top:234px;width:8px;height:1px;background:#7a98c8"></div><div class="b" style="left:1105px;top:236px;width:8px;height:1px;background:#7a98c8"></div>
<div class="b" style="left:1101px;top:558px;width:15px;height:1px;background:#c8c8c8"></div>
<svg style="left:1104px;top:564px" width="9" height="5"><path d="M0 0h9L4.500 5z" fill="#222"/></svg>
<!-- hscroll -->
<div class="b" style="left:289px;top:575px;width:827px;height:15px;background:#ececec"></div>
<div class="b" style="left:289px;top:575px;width:812px;height:1px;background:#7a8a99"></div>
<div class="b" style="left:304px;top:576px;width:1px;height:14px;background:#c0c0c0"></div>
<div class="b" style="left:1085px;top:576px;width:1px;height:14px;background:#c0c0c0"></div>
<div class="b" style="left:1100px;top:576px;width:1px;height:14px;background:#c0c0c0"></div>
<svg style="left:293px;top:578px" width="5" height="9"><path d="M5 0v9L0 4.500z" fill="#222"/></svg>
<svg style="left:1091px;top:578px" width="5" height="9"><path d="M0 0v9l5-4.500z" fill="#222"/></svg>

<!-- back button -->
<div class="b" style="left:658px;top:641px;width:100px;height:31px;box-sizing:border-box;border:1px solid #7a8a99;background:linear-gradient(#fbfdfe,#dce8f3 45%,#bcd1e6);text-align:center;font-size:12px;font-weight:bold;color:#333;line-height:30px">Back</div>

<!-- taskbar -->
<div class="b" style="left:0;top:728px;width:1366px;height:40px;background:#1b1b1b"></div>
<svg style="left:16px;top:740px" width="16" height="16"><path d="M0 2.200l7-1V7.500H0zM8 1l8-1.100V7.500H8zM0 8.500h7v6.300l-7-1zM8 8.500h8V16l-8-1.200z" fill="#fff"/></svg>
<div class="b" style="left:48px;top:728px;width:288px;height:40px;box-sizing:border-box;background:#333;border:1px solid #5e5e5e;border-bottom-width:2px"></div>
<svg style="left:60px;top:739px" width="17" height="18"><circle cx="10.500" cy="6.500" r="5.500" fill="none" stroke="#ddd" stroke-width="1.300"/><path d="M6.500 10.500L1 16.500" stroke="#ddd" stroke-width="1.500"/></svg>
<span class="t" style="left:88px;top:741px;font-size:14.500px;color:#d6d6d6">Type here to search</span>
<svg style="left:256px;top:732px" width="80" height="36"><path d="M0 36L16 28h64v8z" fill="#b58d3e"/><ellipse cx="19" cy="22" rx="11" ry="12" fill="#5f7a5c"/><path d="M18 11l2-7 2 1-1 7z" fill="#8b7a5a"/><ellipse cx="45" cy="16" rx="17" ry="14" fill="#e8650f"/><path d="M38 4q-4 12 0 24M52 4q4 12 0 24" fill="none" stroke="#c04f08"/><path d="M42 6l1-4 5 2 1 3z" fill="#8f5a3a"/><ellipse cx="64" cy="25" rx="11" ry="9" fill="#ec8b14"/><path d="M63 17l-1-7 3 1 1 6z" fill="#8b7a5a"/></svg>
<svg style="left:352px;top:739px" width="17" height="17"><path d="M3.500 1h8M3.500 15h10M1.500 4h11v9h-11zM15 4h2v2h-2zM15 9v4" fill="none" stroke="#eee" stroke-width="1.400"/></svg>
<svg style="left:398px;top:736px" width="26" height="26"><circle cx="13" cy="12" r="11.500" fill="#1b9ad6"/><path d="M3 14C5 5 20 4 23 12c-3-3-9-3-10 1s4 7 9 5c-4 6-14 6-19-4z" fill="#1565b0"/><path d="M13 13c0-4 6-5 11-1 0 4-3 6-6 7-3 0-5-3-5-6z" fill="#5dd66c"/><circle cx="7" cy="19" r="6" fill="#111"/><path d="M6 16h2v6H6z" fill="#ccc"/></svg>
<svg style="left:449px;top:739px" width="22" height="18"><path d="M0 1h8l2 2h12v15H0z" fill="#f3c53f"/><path d="M0 6h22v12H0z" fill="#fbd96b"/><path d="M7 13h8v5H7z" fill="#2f8bd8"/></svg>
<svg style="left:497px;top:736px" width="24" height="24"><circle cx="12" cy="12" r="12" fill="#db4437"/><path d="M12 12L2.300 18.500A12 12 0 0 0 15 23.600z" fill="#0f9d58"/><path d="M12 6h11A12 12 0 0 1 13 24z" fill="#fcc934"/><circle cx="12" cy="12" r="5.500" fill="#fff"/><circle cx="12" cy="12" r="4.300" fill="#3b78e7"/></svg>
<svg style="left:546px;top:736px" width="26" height="26"><circle cx="12" cy="12" r="12" fill="#db4437"/><path d="M12 12L2.300 18.500A12 12 0 0 0 15 23.600z" fill="#0f9d58"/><path d="M12 6h11A12 12 0 0 1 13 24z" fill="#fcc934"/><circle cx="12" cy="12" r="5.500" fill="#fff"/><circle cx="12" cy="12" r="4.300" fill="#3b78e7"/><circle cx="18" cy="18" r="7.500" fill="#8a8572"/><circle cx="16" cy="16" r="2" fill="#ddd"/><circle cx="20" cy="20" r="2.500" fill="#333"/></svg>
<svg style="left:595px;top:736px" width="24" height="24"><circle cx="12" cy="12" r="12" fill="#2c2255"/><path d="M7 1A12 12 0 0 0 7 23 14 14 0 0 1 7 1z" fill="#f7941e"/><path d="M3 9h21M3 12h21M3 15h21" stroke="#e8e6f2" stroke-width="1.400"/></svg>
<svg style="left:644px;top:736px" width="24" height="24"><rect width="24" height="24" rx="3" fill="#ef7f22"/><path d="M5 6h5l2 3 2-3h5v4l-3 2 3 2v4h-5l-2-3-2 3H5v-4l3-2-3-2z" fill="none" stroke="#fff" stroke-width="2.400"/></svg>
<svg style="left:693px;top:736px" width="24" height="24"><rect width="24" height="24" rx="2" fill="#dfe6ec"/><path d="M12 2l4 10H8z" fill="#222"/><circle cx="12.500" cy="8.500" r="2.600" fill="#d11"/><path d="M2 12l6 3 1 6H3zM22 12l-6 3-1 6h6z" fill="#666"/><path d="M8 14h8l1 6H7z" fill="#ccc"/></svg>
<div class="b" style="left:730px;top:728px;width:48px;height:40px;background:#a45f27"></div>
<div class="b" style="left:730px;top:766px;width:48px;height:2px;background:#f77710"></div>
<svg style="left:743px;top:737px" width="22" height="22"><rect width="22" height="22" fill="#2f9be8"/><circle cx="15" cy="5.500" r="2" fill="#fff"/><path d="M0 15l8-7 14 11v3H0z" fill="#163e7d"/><path d="M12 16l4-3 6 5v4h-9z" fill="#3f73c8"/></svg>
<div class="tb" style="left:538px"></div><div class="tb" style="left:587px"></div><div class="tb" style="left:636px"></div><div class="tb" style="left:685px"></div><div class="tb" style="left:440px"></div>

<!-- tray -->
<svg style="left:937px;top:739px" width="24" height="17"><path d="M3.500.8h20v15h-21A1.500 1.500 0 0 1 1 14.500V4h2.500z" fill="none" stroke="#eee" stroke-width="1.300"/><path d="M6 4.500h6v5H6z" fill="none" stroke="#eee"/><path d="M14 5h7M14 8h7M6 12h15" stroke="#eee" stroke-width="1.200"/></svg>
<span class="t" style="left:969px;top:741px;font-size:13.500px;color:#e4e4e4">25°C</span>
<span class="t" style="left:1007px;top:740px;font-size:14px;color:#e4e4e4">Cloudy</span>
<svg style="left:1075px;top:743px" width="12" height="8"><path d="M.5 7L6 1.500 11.500 7" fill="none" stroke="#eee" stroke-width="1.300"/></svg>
<svg style="left:1099px;top:739px" width="13" height="17"><path d="M3 3.500a4 4 0 0 1 6 0M3 14a4 4 0 0 0 6 0" fill="none" stroke="#bbb"/><path d="M1 5.500h8v6H1zM9 7.500l3-1.500v5l-3-1.500" fill="none" stroke="#eee" stroke-width="1.100"/></svg>
<svg style="left:1121px;top:742px" width="18" height="14"><path d="M3 12a3 3 0 0 1 0-6 5 5 0 0 1 9-2 4 4 0 0 1 3 5v3z" fill="#a8a8a8"/><circle cx="13" cy="9" r="5" fill="#666"/><path d="M11.500 7v4M14.500 7v4" stroke="#fff"/></svg>
<svg style="left:1146px;top:743px" width="16" height="10"><path d="M.5.500h13v9H.5z" fill="none" stroke="#eee"/><path d="M2 2h3v6H2z" fill="#eee"/><path d="M14.500 3h1.500v4h-1.500z" fill="#eee"/></svg>
<svg style="left:1172px;top:741px" width="15" height="15"><path d="M.5 14a13 13 0 0 1 13-13M3.500 14a10 10 0 0 1 10-10M6.500 14a7 7 0 0 1 7-7" fill="none" stroke="#bbb"/><circle cx="11.500" cy="13" r="1.500" fill="#eee"/></svg>
<svg style="left:1193px;top:741px" width="17" height="14"><path d="M.5 5h3l4-4v12l-4-4h-3z" fill="none" stroke="#eee"/><path d="M10 4a4 4 0 0 1 0 6M12 2.500a6.500 6.500 0 0 1 0 9" fill="none" stroke="#bbb"/><path d="M14.500 1a8.500 8.500 0 0 1 0 12" fill="none" stroke="#666"/></svg>
<span class="t" style="left:1219px;top:732px;font-size:12px;color:#e4e4e4">ENG</span>
<span class="t" style="left:1224px;top:749px;font-size:12px;color:#e4e4e4">US</span>
<span class="t" style="left:1257px;top:730px;font-size:12px;color:#e4e4e4">12:33 PM</span>
<span class="t" style="left:1252px;top:748px;font-size:12px;color:#e4e4e4">10/26/2023</span>
<svg style="left:1325px;top:740px" width="16" height="16"><path d="M0 0h16v12H6l-3 3v-3H0z" fill="#eee"/><path d="M3 3.500h10M3 6h10M3 8.500h7" stroke="#333"/></svg>
<div class="b" style="left:1333px;top:746px;width:15px;height:15px;background:#2a2a2a;border:1px solid #888;border-radius:50%"></div>
<span class="t" style="left:1333px;top:746px;width:17px;text-align:center;font-size:11px;color:#fff">8</span>
<div class="b" style="left:1365px;top:728px;width:1px;height:40px;background:#666"></div>
</body></html>
